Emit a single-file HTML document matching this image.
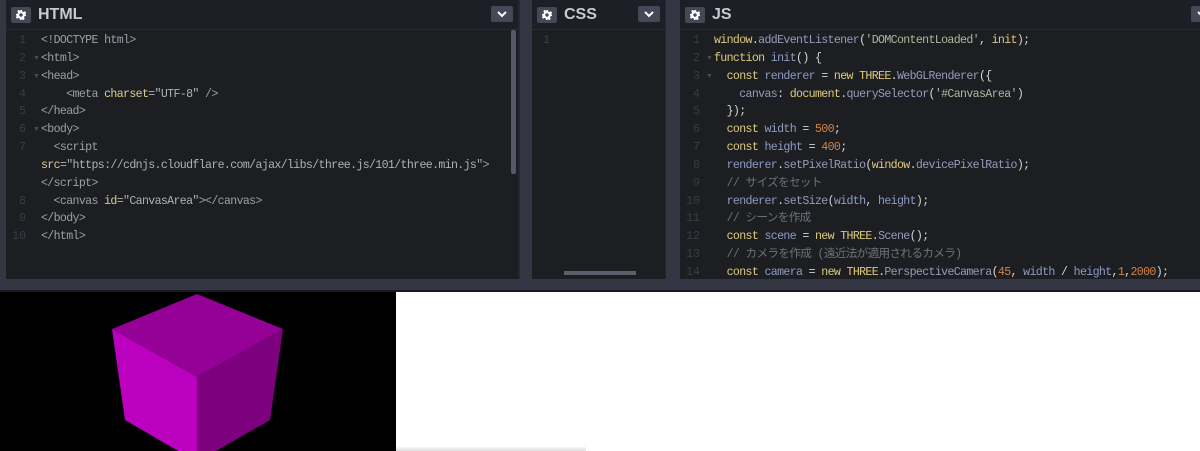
<!DOCTYPE html>
<html><head><meta charset="utf-8">
<style>
*{margin:0;padding:0;box-sizing:border-box}
body{width:1200px;height:451px;overflow:hidden;background:#343644;position:relative;font-family:"Liberation Sans",sans-serif}
.panel{position:absolute;top:0;height:279px;background:#1d1e22;overflow:hidden}
.hd{height:30px;background:#1e1f26;border-bottom:1px solid #2a2b33;position:relative}
.gear{position:absolute;left:5px;top:7px;width:20px;height:16px;background:#444857;border-radius:2px}
.gear svg{position:absolute;left:5px;top:3px}
.title{position:absolute;left:32px;top:6px;color:#c8cad2;font-weight:bold;font-size:16px}
.chev{position:absolute;top:6px;width:22px;height:16px;background:#444857;border-radius:2px}
.chev svg{position:absolute;left:6px;top:4px}
.code{position:absolute;top:32px;left:0;font-family:"Liberation Mono","Noto Sans CJK JP",monospace;font-size:11.6px;letter-spacing:-0.65px;line-height:17.85px;white-space:pre;color:#c8c8c8}
.ln{position:absolute;top:32px;font-family:"Liberation Mono",monospace;font-size:11.6px;line-height:17.85px;color:#3a3c45;text-align:right;white-space:pre}
.fold{position:absolute;font-size:7px;color:#4a4c55;line-height:17.85px;white-space:pre;top:32px}
.t{color:#9e9ea6}.a{color:#d8cc8e}.s{color:#b0b0b8}
.k{color:#ddca7e}.m{color:#9b98bb}.i{color:#8f9ac4}.n{color:#d28445}.c{color:#6f717a}.g{color:#a9bb9b}.p{color:#d5d5d5}
</style></head><body>
<svg width="0" height="0" style="position:absolute"><defs><symbol id="gr" viewBox="0 0 10 10"><path d="M4 0h2l.3 1.5 1.2.6 1.3-.9 1.4 1.4-.9 1.3.6 1.2L10 4v2l-1.5.3-.6 1.2.9 1.3-1.4 1.4-1.3-.9-1.2.6L6 10H4l-.3-1.5-1.2-.6-1.3.9-1.4-1.4.9-1.3-.6-1.2L0 6V4l1.5-.3.6-1.2-.9-1.3 1.4-1.4 1.3.9 1.2-.6z M5 3.3a1.7 1.7 0 1 0 0 3.4a1.7 1.7 0 1 0 0-3.4z" fill="#fff" fill-rule="evenodd"/></symbol></defs></svg>
<div class="panel" style="left:6px;width:512px">
 <div class="hd"><div class="gear"><svg width="10" height="10"><use href="#gr"/></svg></div><div class="title">HTML</div><div class="chev" style="left:485px"><svg width="10" height="8"><path d="M1 2 L5 6 L9 2" stroke="#fff" stroke-width="2" fill="none"/></svg></div></div>
 <div class="ln" style="left:0;width:20px">1
2
3
4
5
6
7


8
9
10</div>
 <div class="fold" style="left:27px">
▼
▼


▼</div>
 <div class="code" style="left:35px"><span class="t">&lt;!DOCTYPE html&gt;</span>
<span class="t">&lt;html&gt;</span>
<span class="t">&lt;head&gt;</span>
    <span class="t">&lt;meta</span> <span class="a">charset</span><span class="s">="UTF-8"</span> <span class="t">/&gt;</span>
<span class="t">&lt;/head&gt;</span>
<span class="t">&lt;body&gt;</span>
  <span class="t">&lt;script</span>
<span class="a">src</span><span class="s">="https://cdnjs.cloudflare.com/ajax/libs/three.js/101/three.min.js"</span><span class="t">&gt;</span>
<span class="t">&lt;/script&gt;</span>
  <span class="t">&lt;canvas</span> <span class="a">id</span><span class="s">="CanvasArea"</span><span class="t">&gt;&lt;/canvas&gt;</span>
<span class="t">&lt;/body&gt;</span>
<span class="t">&lt;/html&gt;</span></div>
 <div style="position:absolute;left:505px;top:30px;width:5px;height:144px;background:#555a66;border-radius:2px"></div>
</div>
<div style="position:absolute;left:518px;top:0;width:2px;height:279px;background:#26272f"></div>
<div class="panel" style="left:532px;width:133px">
 <div class="hd"><div class="gear"><svg width="10" height="10"><use href="#gr"/></svg></div><div class="title">CSS</div><div class="chev" style="left:106px"><svg width="10" height="8"><path d="M1 2 L5 6 L9 2" stroke="#fff" stroke-width="2" fill="none"/></svg></div></div>
 <div class="ln" style="left:0;width:18px">1</div>
 <div style="position:absolute;left:32px;top:271px;width:72px;height:4px;background:#5a5f6d"></div>
</div>
<div style="position:absolute;left:665px;top:0;width:1px;height:279px;background:#26272f"></div>
<div class="panel" style="left:680px;width:520px">
 <div class="hd"><div class="gear"><svg width="10" height="10"><use href="#gr"/></svg></div><div class="title">JS</div><div class="chev" style="left:511px"><svg width="10" height="8"><path d="M1 2 L5 6 L9 2" stroke="#fff" stroke-width="2" fill="none"/></svg></div></div>
 <div class="ln" style="left:0;width:20px">1
2
3
4
5
6
7
8
9
10
11
12
13
14</div>
 <div class="fold" style="left:26px">
▼
▼</div>
 <div class="code" style="left:34px"><span class="k">window</span><span class="p">.</span><span class="m">addEventListener</span><span class="p">(</span><span class="g">'DOMContentLoaded'</span><span class="p">, </span><span class="k">init</span><span class="p">);</span>
<span class="k">function</span> <span class="i">init</span><span class="p">() {</span>
  <span class="k">const</span> <span class="i">renderer</span> <span class="p">=</span> <span class="k">new THREE</span><span class="p">.</span><span class="m">WebGLRenderer</span><span class="p">({</span>
    <span class="m">canvas</span><span class="p">: </span><span class="k">document</span><span class="p">.</span><span class="m">querySelector</span><span class="p">(</span><span class="g">'#CanvasArea'</span><span class="p">)</span>
  <span class="p">});</span>
  <span class="k">const</span> <span class="i">width</span> <span class="p">=</span> <span class="n">500</span><span class="p">;</span>
  <span class="k">const</span> <span class="i">height</span> <span class="p">=</span> <span class="n">400</span><span class="p">;</span>
  <span class="i">renderer</span><span class="p">.</span><span class="m">setPixelRatio</span><span class="p">(</span><span class="k">window</span><span class="p">.</span><span class="m">devicePixelRatio</span><span class="p">);</span>
  <span class="c">// サイズをセット</span>
  <span class="i">renderer</span><span class="p">.</span><span class="m">setSize</span><span class="p">(</span><span class="i">width</span><span class="p">, </span><span class="i">height</span><span class="p">);</span>
  <span class="c">// シーンを作成</span>
  <span class="k">const</span> <span class="i">scene</span> <span class="p">=</span> <span class="k">new THREE</span><span class="p">.</span><span class="m">Scene</span><span class="p">();</span>
  <span class="c">// カメラを作成 (遠近法が適用されるカメラ)</span>
  <span class="k">const</span> <span class="i">camera</span> <span class="p">=</span> <span class="k">new THREE</span><span class="p">.</span><span class="m">PerspectiveCamera</span><span class="p">(</span><span class="n">45</span><span class="p">, </span><span class="i">width</span> <span class="p">/</span> <span class="i">height</span><span class="p">,</span><span class="n">1</span><span class="p">,</span><span class="n">2000</span><span class="p">);</span></div>
</div>
<div style="position:absolute;left:0;top:290px;width:1200px;height:2px;background:#1a1b20"></div>
<div style="position:absolute;left:0;top:292px;width:1200px;height:159px;background:#fff"></div>
<div style="position:absolute;left:396px;top:446px;width:190px;height:5px;background:linear-gradient(#fff,#ddd)"></div>
<svg style="position:absolute;left:0;top:292px" width="396" height="159">
<rect width="396" height="159" fill="#000"/>
<polygon points="197,2 283,37 197,85 112,37" fill="#950097"/>
<polygon points="112,37 197,85 197,170 125,128" fill="#bb00bf"/>
<polygon points="197,85 283,37 270,128 197,170" fill="#7d007f"/>
</svg>
</body></html>
